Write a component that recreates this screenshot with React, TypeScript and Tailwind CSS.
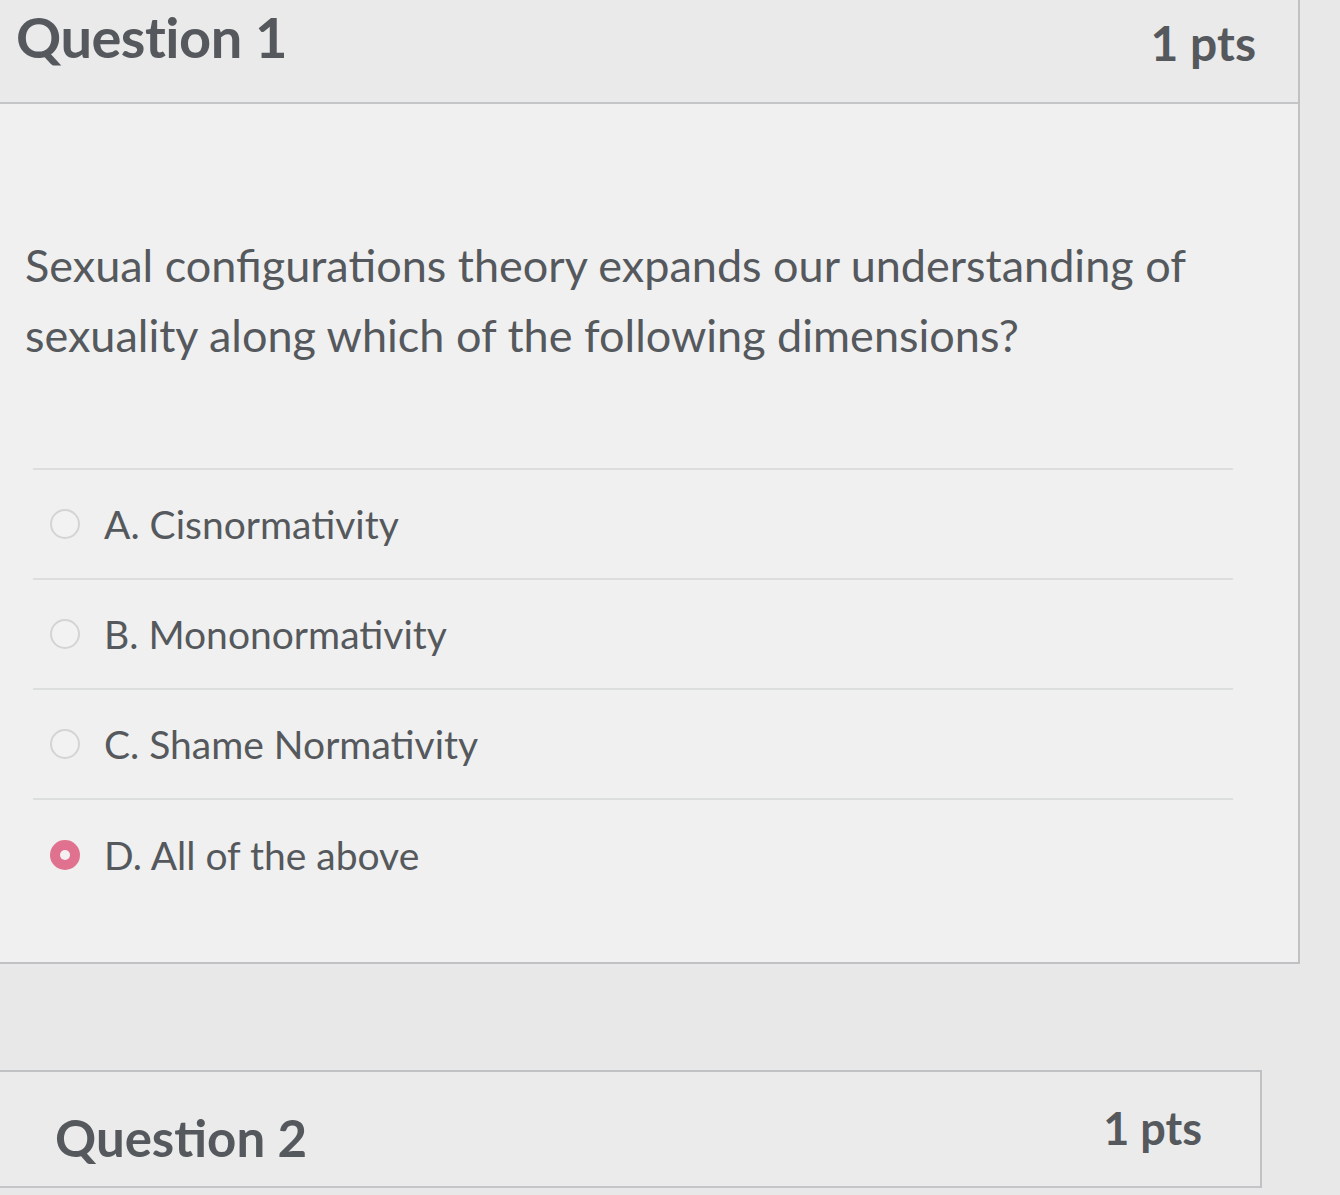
const answers = [
  { id: 'a', label: 'A. Cisnormativity', checked: false },
  { id: 'b', label: 'B. Mononormativity', checked: false },
  { id: 'c', label: 'C. Shame Normativity', checked: false },
  { id: 'd', label: 'D. All of the above', checked: true },
]

const Radio = ({ checked }: { checked: boolean }) =>
  checked ? (
    <span className="flex h-[30px] w-[30px] shrink-0 items-center justify-center rounded-full bg-[#e0728f]">
      <span className="h-[10px] w-[10px] rounded-full bg-[#f4f0f1]" />
    </span>
  ) : (
    <span className="h-[30px] w-[30px] shrink-0 rounded-full border-2 border-[#d3d4d4] bg-[#f1f2f1]" />
  )

export default function App() {
  return (
    <div
      className="min-h-[1195px] w-[1340px] overflow-hidden bg-[#e7e8e7] text-[#4b4e53]"
      style={{ fontFamily: 'Lato, "Open Sans", sans-serif' }}
    >
      {/* Question 1 card */}
      <section className="w-[1300px] border-r-2 border-b-2 border-[#bfc1c2] bg-[#eff0ef]">
        <header className="flex h-[104px] items-start justify-between border-b-2 border-[#c4c5c6] bg-[#e9eae9] pl-[16px] pr-[42px]">
          <h2 className="mt-[2px] text-[56px] font-bold leading-[70px] tracking-[-0.5px] text-[#55585c]">Question 1</h2>
          <span className="mt-[8px] text-[48px] font-bold leading-[70px] text-[#55585c]">1 pts</span>
        </header>

        <div className="pb-[52px] pl-[25px] pr-[40px] pt-[126px]">
          <p className="text-[45px] leading-[70px] text-[#55585c]">
            Sexual configurations theory expands our understanding of sexuality along which of the following
            dimensions?
          </p>

          <div className="ml-[8px] mt-[98px] w-[1200px] border-t-2 border-[#dcdddd]">
            {answers.map((a, i) => (
              <label
                key={a.id}
                className={`flex h-[110px] items-center gap-[24px] pl-[17px] ${
                  i < answers.length - 1 ? 'border-b-2 border-[#dcdddd]' : ''
                }`}
              >
                <Radio checked={a.checked} />
                <span className="text-[39px] leading-none text-[#55585c]">{a.label}</span>
              </label>
            ))}
          </div>
        </div>
      </section>

      {/* Question 2 card */}
      <section className="mt-[106px] w-[1262px] border-t-2 border-r-2 border-[#bfc1c2] bg-[#eaebea]">
        <header className="flex h-[116px] items-start justify-between border-b-2 border-[#c4c5c6] pl-[55px] pr-[58px]">
          <h2 className="mt-[36px] text-[51px] font-bold leading-[60px] text-[#55585c]">Question 2</h2>
          <span className="mt-[26px] text-[45px] font-bold leading-[60px] text-[#55585c]">1 pts</span>
        </header>
      </section>
    </div>
  )
}
